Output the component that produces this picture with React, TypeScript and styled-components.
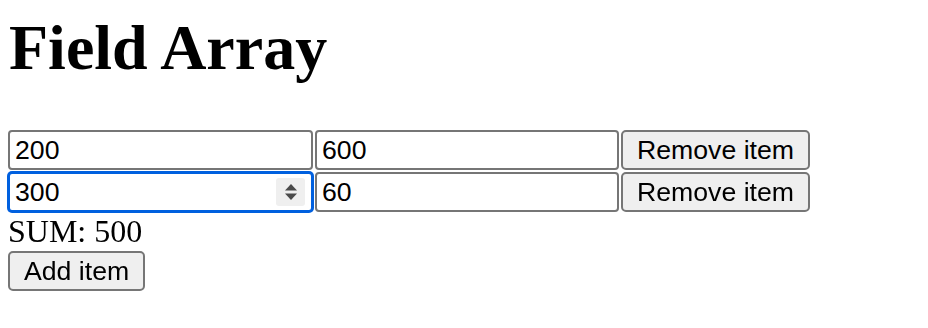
import React, { useState } from "react"
import styled, { createGlobalStyle } from "styled-components"

const GlobalStyle = createGlobalStyle`
  html, body {
    margin: 0;
    padding: 0;
    background: #ffffff;
  }
  body {
    font-family: "Liberation Serif", "Times New Roman", serif;
    color: #000000;
  }
`

type Item = { a: string; b: string }

const App: React.FC = () => {
  const [items, setItems] = useState<Item[]>([
    { a: "200", b: "600" },
    { a: "300", b: "60" },
  ])

  const sum = items.reduce((acc, it) => acc + (Number(it.a) || 0), 0)

  const update = (i: number, key: keyof Item, value: string) => {
    setItems(prev => prev.map((it, idx) => (idx === i ? { ...it, [key]: value } : it)))
  }

  return (
    <Page>
      <GlobalStyle />
      <Heading>Field Array</Heading>
      <Rows>
        {items.map((item, i) => (
          <Row key={i}>
            <Field width={305} focused={i === 1}>
              <NumberInput
                type="text"
                value={item.a}
                autoFocus={i === 1}
                onChange={e => update(i, "a", e.target.value)}
              />
              {i === 1 ? (
                <Spinner>
                  <svg width="14" height="18" viewBox="0 0 14 18">
                    <path d="M7 1 L13 7.5 L1 7.5 Z" fill="#4a4a4a" />
                    <path d="M1 10.5 L13 10.5 L7 17 Z" fill="#4a4a4a" />
                  </svg>
                </Spinner>
              ) : null}
            </Field>
            <Field width={304}>
              <NumberInput
                type="text"
                value={item.b}
                onChange={e => update(i, "b", e.target.value)}
              />
            </Field>
            <Button onClick={() => setItems(prev => prev.filter((_, idx) => idx !== i))}>
              Remove item
            </Button>
          </Row>
        ))}
      </Rows>
      <Sum>SUM: {sum}</Sum>
      <Button onClick={() => setItems(prev => [...prev, { a: "", b: "" }])}>Add item</Button>
    </Page>
  )
}

const Page = styled.div`
  padding: 12px 8px;
  display: flex;
  flex-direction: column;
  align-items: flex-start;
`

const Heading = styled.h1`
  font-family: "Liberation Serif", "Times New Roman", serif;
  font-size: 64px;
  font-weight: bold;
  line-height: 71px;
  margin: 0 0 47px 1px;
`

const Rows = styled.div`
  display: flex;
  flex-direction: column;
  gap: 2px;
`

const Row = styled.div`
  display: flex;
  gap: 2px;
`

const Field = styled.div<{ width: number; focused?: boolean }>`
  box-sizing: border-box;
  width: ${props => props.width}px;
  height: 40px;
  display: flex;
  align-items: center;
  border: 2px solid ${props => (props.focused ? "#0060df" : "#767676")};
  border-radius: 4px;
  box-shadow: ${props => (props.focused ? "0 0 0 1px #0060df" : "none")};
  background: #ffffff;
  padding: 0 6px 0 5px;
`

const NumberInput = styled.input`
  flex: 1;
  min-width: 0;
  border: none;
  outline: none;
  padding: 0;
  margin: 0;
  background: transparent;
  font-family: "Liberation Sans", Arial, sans-serif;
  font-size: 26.67px;
  color: #000000;
  caret-color: #000000;
`

const Spinner = styled.div`
  width: 29px;
  height: 28px;
  background: #efefef;
  border-radius: 3px;
  display: flex;
  align-items: center;
  justify-content: center;
`

const Button = styled.button`
  box-sizing: border-box;
  height: 40px;
  padding: 0 14px;
  border: 2px solid #767676;
  border-radius: 5px;
  background: #efefef;
  font-family: "Liberation Sans", Arial, sans-serif;
  font-size: 26.67px;
  color: #000000;
  cursor: pointer;
`

const Sum = styled.div`
  font-family: "Liberation Serif", "Times New Roman", serif;
  font-size: 32px;
  line-height: 37px;
  margin: 1px 0 1px;
`

export default App
